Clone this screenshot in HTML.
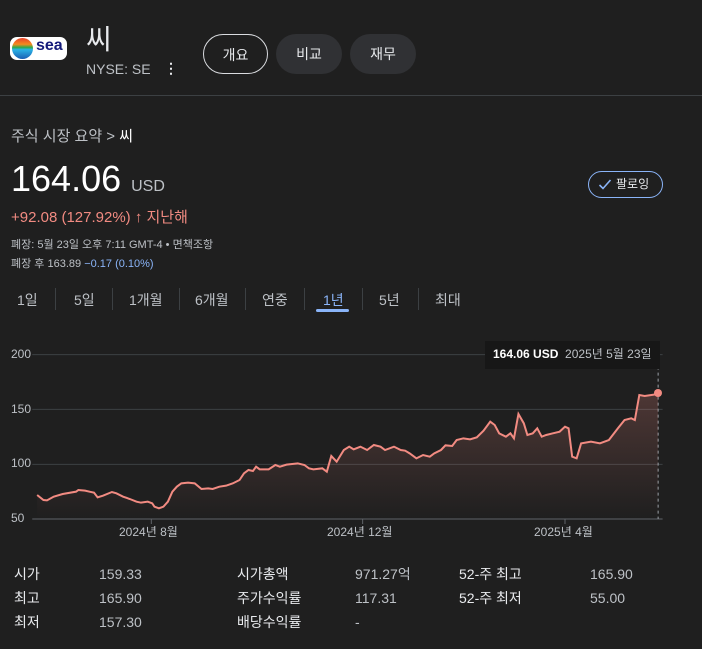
<!DOCTYPE html>
<html><head><meta charset="utf-8"><style>
*{margin:0;padding:0;box-sizing:border-box}
body{width:702px;height:649px;background:#1f1f1f;font-family:"Liberation Sans","Noto Sans CJK KR",sans-serif;color:#e8eaed;position:relative;overflow:hidden}
.a{position:absolute;white-space:nowrap}
.btn{position:absolute;top:34px;height:40px;border-radius:20px;background:#303134;color:#e8eaed;font-size:14px;line-height:40px;text-align:center}
.g{color:#bdc1c6}
.tab{position:absolute;top:290px;font-size:14px;color:#bdc1c6}
.sep{position:absolute;top:288px;width:1px;height:22px;background:#3c4043}
.st{position:absolute;font-size:14px;line-height:18px}
</style></head><body>
<div class="a" style="left:10px;top:37px;width:57px;height:23px;background:#fff;border-radius:7px;overflow:hidden">
<div style="position:absolute;left:2px;top:1px;width:21px;height:21px;border-radius:50%;background:linear-gradient(#e8402a 0%,#f58a1f 30%,#2ba84a 45%,#2ab3e6 55%,#1a5fb4 100%)"></div>
<div style="position:absolute;left:26px;top:1px;font:bold 16px/16px 'Liberation Sans',sans-serif;color:#141a7a">sea</div>
</div>
<div class="a" style="left:86px;top:18px;font-size:28px;color:#e8eaed">씨</div>
<div class="a" style="left:86px;top:61px;font-size:14px;color:#bdc1c6">NYSE: SE</div>
<div class="a" style="left:164px;top:60px;font-size:14px;color:#e8eaed;font-weight:bold">⋮</div>
<div class="btn" style="left:203px;width:65px;background:transparent;border:1px solid #dadce0">개요</div>
<div class="btn" style="left:276px;width:66px">비교</div>
<div class="btn" style="left:350px;width:66px">재무</div>
<div class="a" style="left:0;top:95px;width:702px;height:1px;background:#3c4043"></div>
<div class="a g" style="left:11px;top:125px;font-size:15px">주식 시장 요약 &gt; <span style="color:#fff">씨</span></div>
<div class="a" style="left:11px;top:158px;font-size:36px;color:#fff">164.06 <span style="font-size:16px;color:#bdc1c6">USD</span></div>
<div class="a" style="left:11px;top:206px;font-size:15px;color:#f28b82">+92.08 (127.92%) <b>↑</b> 지난해</div>
<div class="a g" style="left:11px;top:236px;font-size:11px">폐장: 5월 23일 오후 7:11 GMT-4 • 면책조항</div>
<div class="a g" style="left:11px;top:255px;font-size:11px">폐장 후 163.89 <span style="color:#8ab4f8">−0.17 (0.10%)</span></div>
<div class="a" style="left:588px;top:171px;width:75px;height:27px;border:1px solid #8ab4f8;border-radius:14px;font-size:12px;line-height:25px;color:#e8eaed;padding-left:27px">팔로잉
<svg style="position:absolute;left:9px;top:6px" width="14" height="13" viewBox="0 0 14 13"><path d="M1.5 7l3.5 3.5L12.5 2" stroke="#8ab4f8" stroke-width="1.6" fill="none"/></svg></div>
<div class="tab" style="left:17px">1일</div><div class="sep" style="left:55px"></div>
<div class="tab" style="left:74px">5일</div><div class="sep" style="left:112px"></div>
<div class="tab" style="left:129px">1개월</div><div class="sep" style="left:179px"></div>
<div class="tab" style="left:195px">6개월</div><div class="sep" style="left:245px"></div>
<div class="tab" style="left:262px">연중</div><div class="sep" style="left:304px"></div>
<div class="tab" style="left:323px;color:#8ab4f8">1년</div><div class="a" style="left:316px;top:309px;width:33px;height:3px;border-radius:2px;background:#8ab4f8"></div><div class="sep" style="left:362px"></div>
<div class="tab" style="left:379px">5년</div><div class="sep" style="left:418px"></div>
<div class="tab" style="left:435px">최대</div>
<svg class="a" style="left:0;top:340px" width="702" height="200" viewBox="0 0 1568 600" preserveAspectRatio="none">
<defs><linearGradient id="f" x1="0" y1="0" x2="0" y2="1"><stop offset="0" stop-color="#f28b82" stop-opacity="0.22"/><stop offset="1" stop-color="#f28b82" stop-opacity="0"/></linearGradient></defs>
<g stroke="#3c4043" stroke-width="1">
<line x1="72" y1="44" x2="1480" y2="44" vector-effect="non-scaling-stroke"/><line x1="72" y1="208" x2="1480" y2="208" vector-effect="non-scaling-stroke"/><line x1="72" y1="373" x2="1480" y2="373" vector-effect="non-scaling-stroke"/><line x1="72" y1="537" x2="1480" y2="537" vector-effect="non-scaling-stroke" stroke="#5f6368"/>
<line x1="338" y1="537" x2="338" y2="552" vector-effect="non-scaling-stroke" stroke="#5f6368"/><line x1="810" y1="537" x2="810" y2="552" vector-effect="non-scaling-stroke" stroke="#5f6368"/><line x1="1262" y1="537" x2="1262" y2="552" vector-effect="non-scaling-stroke" stroke="#5f6368"/>
</g>
<line x1="1470" y1="80" x2="1470" y2="537" stroke="#9aa0a6" stroke-dasharray="3 3" vector-effect="non-scaling-stroke"/>
<path d="M83,465 97,480 105,481 120,470 140,462 170,455 175,450 190,452 200,455 210,458 218,472 230,467 250,456 260,460 275,470 290,477 305,485 315,488 330,485 340,490 345,500 355,505 365,500 375,485 385,455 395,440 405,430 420,428 435,430 450,447 465,445 475,447 490,440 505,437 520,430 535,420 545,400 555,390 565,393 572,380 580,388 600,388 615,375 625,380 640,374 665,370 680,375 690,385 700,388 720,385 730,395 740,348 752,365 768,330 780,320 790,328 805,320 820,330 835,315 850,320 860,330 880,320 895,330 905,332 915,340 930,355 945,345 960,350 970,340 985,330 995,316 1010,318 1020,300 1035,295 1050,298 1065,292 1080,272 1095,245 1105,255 1115,280 1130,290 1140,280 1148,295 1158,222 1170,250 1178,285 1190,280 1200,265 1210,290 1220,285 1235,280 1250,275 1262,260 1270,265 1278,350 1288,355 1298,310 1320,305 1340,310 1360,300 1380,265 1395,240 1410,235 1418,240 1428,165 1440,168 1455,165 1470,162" fill="none" stroke="#f28b82" stroke-width="2" vector-effect="non-scaling-stroke"/>
<path d="M83,465 97,480 105,481 120,470 140,462 170,455 175,450 190,452 200,455 210,458 218,472 230,467 250,456 260,460 275,470 290,477 305,485 315,488 330,485 340,490 345,500 355,505 365,500 375,485 385,455 395,440 405,430 420,428 435,430 450,447 465,445 475,447 490,440 505,437 520,430 535,420 545,400 555,390 565,393 572,380 580,388 600,388 615,375 625,380 640,374 665,370 680,375 690,385 700,388 720,385 730,395 740,348 752,365 768,330 780,320 790,328 805,320 820,330 835,315 850,320 860,330 880,320 895,330 905,332 915,340 930,355 945,345 960,350 970,340 985,330 995,316 1010,318 1020,300 1035,295 1050,298 1065,292 1080,272 1095,245 1105,255 1115,280 1130,290 1140,280 1148,295 1158,222 1170,250 1178,285 1190,280 1200,265 1210,290 1220,285 1235,280 1250,275 1262,260 1270,265 1278,350 1288,355 1298,310 1320,305 1340,310 1360,300 1380,265 1395,240 1410,235 1418,240 1428,165 1440,168 1455,165 1470,162 L1470,537 L83,537Z" fill="url(#f)"/>
</svg>
<div class="a" style="left:654px;top:389px;width:8px;height:8px;border-radius:50%;background:#f28b82"></div>
<div class="a g" style="left:11px;top:347px;font-size:12px">200</div>
<div class="a g" style="left:11px;top:402px;font-size:12px">150</div>
<div class="a g" style="left:11px;top:456px;font-size:12px">100</div>
<div class="a g" style="left:11px;top:511px;font-size:12px">50</div>
<div class="a g" style="left:119px;top:523px;font-size:12px">2024년 8월</div>
<div class="a g" style="left:327px;top:523px;font-size:12px">2024년 12월</div>
<div class="a g" style="left:534px;top:523px;font-size:12px">2025년 4월</div>
<div class="a" style="left:485px;top:341px;width:175px;height:28px;background:#171717;font-size:12px;line-height:27px;padding-left:8px;color:#bdc1c6"><b style="color:#fff">164.06 USD</b>&nbsp; 2025년 5월 23일</div>
<div class="st" style="left:14px;top:565px">시가</div><div class="st g" style="left:99px;top:565px">159.33</div>
<div class="st" style="left:14px;top:589px">최고</div><div class="st g" style="left:99px;top:589px">165.90</div>
<div class="st" style="left:14px;top:613px">최저</div><div class="st g" style="left:99px;top:613px">157.30</div>
<div class="st" style="left:237px;top:565px">시가총액</div><div class="st g" style="left:355px;top:565px">971.27억</div>
<div class="st" style="left:237px;top:589px">주가수익률</div><div class="st g" style="left:355px;top:589px">117.31</div>
<div class="st" style="left:237px;top:613px">배당수익률</div><div class="st g" style="left:355px;top:613px">-</div>
<div class="st" style="left:459px;top:565px">52-주 최고</div><div class="st g" style="left:590px;top:565px">165.90</div>
<div class="st" style="left:459px;top:589px">52-주 최저</div><div class="st g" style="left:590px;top:589px">55.00</div>
</body></html>
